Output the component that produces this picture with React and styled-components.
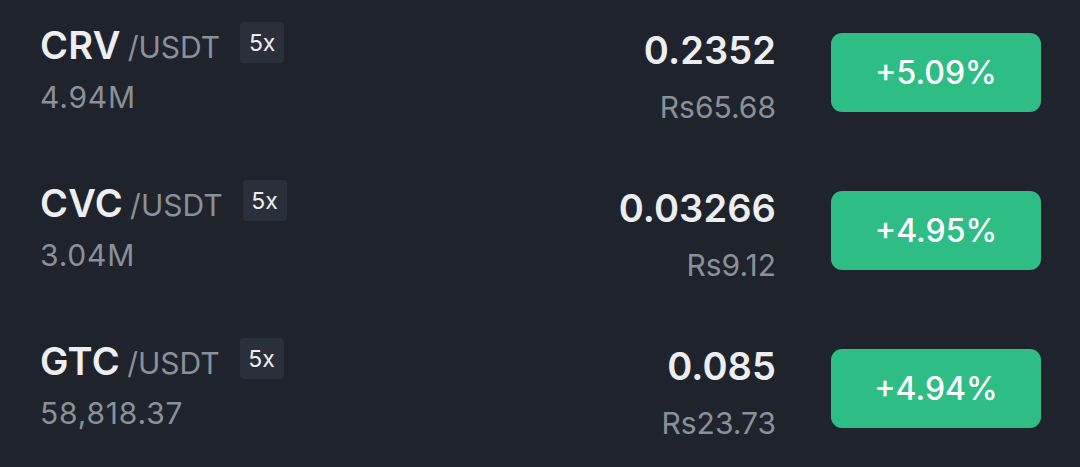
import styled, { createGlobalStyle } from "styled-components";

const GlobalStyle = createGlobalStyle`
  html, body {
    margin: 0;
    padding: 0;
    background: #1f242c;
    overflow: hidden;
  }
  body {
    font-family: Inter, "Noto Sans", sans-serif;
  }
`;

const List = styled.div`
  width: 1080px;
  height: 467px;
  overflow: hidden;
  background: #1f242c;
  display: flex;
  flex-direction: column;
  padding: 0 39px 0 40px;
  box-sizing: border-box;
`;

const Row = styled.div`
  flex: 0 0 158px;
  display: flex;
  align-items: center;
  &:first-child {
    margin-top: -7px;
  }
`;

const Pair = styled.div`
  flex: 1;
  display: flex;
  flex-direction: column;
  gap: 12px;
  margin-top: -9px;
`;

const TitleLine = styled.div`
  display: flex;
  align-items: center;
  height: 46px;
`;

const Base = styled.span`
  font-size: 38px;
  font-weight: 600;
  color: #eceef1;
  letter-spacing: 0.3px;
`;

const Quote = styled.span`
  font-size: 30px;
  font-weight: 400;
  color: #8a9099;
  margin-left: 7px;
  margin-top: 4px;
`;

const Leverage = styled.span`
  margin-left: 20px;
  width: 44px;
  height: 41px;
  border-radius: 4px;
  background: #2a303a;
  color: #eceef1;
  font-size: 23px;
  display: flex;
  align-items: center;
  justify-content: center;
  margin-top: -4px;
`;

const Volume = styled.div`
  font-size: 30px;
  color: #8a9099;
  line-height: 34px;
  letter-spacing: 0.8px;
`;

const Prices = styled.div`
  display: flex;
  flex-direction: column;
  align-items: flex-end;
  gap: 18px;
  margin-right: 55px;
  margin-top: 8px;
`;

const Last = styled.div`
  font-size: 38px;
  font-weight: 600;
  color: #eceef1;
  line-height: 44px;
  letter-spacing: 0.1px;
`;

const Fiat = styled.div`
  font-size: 30px;
  color: #8a9099;
  line-height: 34px;
`;

const Change = styled.div`
  width: 210px;
  height: 79px;
  border-radius: 11px;
  background: ${({ $up }) => ($up ? "#2ebd85" : "#f6465d")};
  color: #ffffff;
  font-size: 32px;
  font-weight: 500;
  display: flex;
  align-items: center;
  justify-content: center;
`;

const markets = [
  { base: "CRV", vol: "4.94M", last: "0.2352", fiat: "Rs65.68", change: "+5.09%" },
  { base: "CVC", vol: "3.04M", last: "0.03266", fiat: "Rs9.12", change: "+4.95%" },
  { base: "GTC", vol: "58,818.37", last: "0.085", fiat: "Rs23.73", change: "+4.94%" },
];

export default function App() {
  return (
    <>
      <GlobalStyle />
      <List>
        {markets.map((m) => (
          <Row key={m.base}>
            <Pair>
              <TitleLine>
                <Base>{m.base}</Base>
                <Quote>/USDT</Quote>
                <Leverage>5x</Leverage>
              </TitleLine>
              <Volume>{m.vol}</Volume>
            </Pair>
            <Prices>
              <Last>{m.last}</Last>
              <Fiat>{m.fiat}</Fiat>
            </Prices>
            <Change $up>{m.change}</Change>
          </Row>
        ))}
      </List>
    </>
  );
}
